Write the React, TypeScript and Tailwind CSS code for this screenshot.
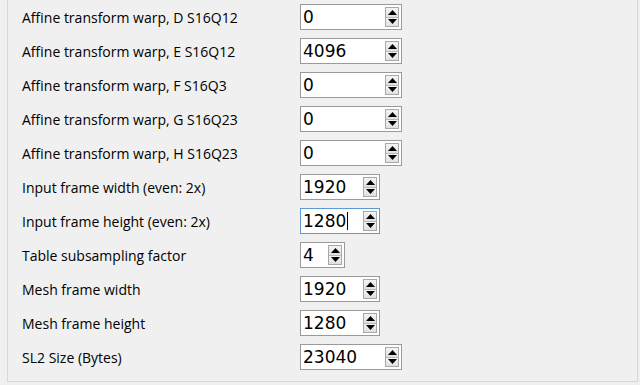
import React from 'react'

type Row = { label: string; value: string; width: string; focused?: boolean }

const rows: Row[] = [
  { label: 'Affine transform warp, D S16Q12', value: '0', width: 'w-[102px]' },
  { label: 'Affine transform warp, E S16Q12', value: '4096', width: 'w-[102px]' },
  { label: 'Affine transform warp, F S16Q3', value: '0', width: 'w-[102px]' },
  { label: 'Affine transform warp, G S16Q23', value: '0', width: 'w-[102px]' },
  { label: 'Affine transform warp, H S16Q23', value: '0', width: 'w-[102px]' },
  { label: 'Input frame width (even: 2x)', value: '1920', width: 'w-[80px]' },
  { label: 'Input frame height (even: 2x)', value: '1280', width: 'w-[80px]', focused: true },
  { label: 'Table subsampling factor', value: '4', width: 'w-[45px]' },
  { label: 'Mesh frame width', value: '1920', width: 'w-[80px]' },
  { label: 'Mesh frame height', value: '1280', width: 'w-[80px]' },
  { label: 'SL2 Size (Bytes)', value: '23040', width: 'w-[102px]' },
]

function SpinButtons() {
  return (
    <div className="flex flex-col h-full w-[14px] border border-[#a8a8a8] bg-[#e6e6e6]">
      <div className="flex-1 flex items-center justify-center border-b border-[#b8b8b8] bg-gradient-to-b from-[#f4f4f4] to-[#e0e0e0]">
        <svg width="9" height="5" viewBox="0 0 9 5">
          <path d="M0 5 L4.5 0 L9 5 Z" fill="#000" />
        </svg>
      </div>
      <div className="flex-1 flex items-center justify-center bg-gradient-to-b from-[#f4f4f4] to-[#e0e0e0]">
        <svg width="9" height="5" viewBox="0 0 9 5">
          <path d="M0 0 L4.5 5 L9 0 Z" fill="#000" />
        </svg>
      </div>
    </div>
  )
}

function SpinBox({ value, width, focused }: { value: string; width: string; focused?: boolean }) {
  return (
    <div
      className={`${width} h-[26px] flex items-stretch bg-white border ${
        focused ? 'border-[#5b9bd5]' : 'border-[#9a9a9a]'
      } py-[2px] pr-[2px]`}
    >
      <div className="flex-1 flex items-center pl-[2px] text-[17px] leading-none text-black font-['DejaVu_Sans',sans-serif]">
        {value}
        {focused && <span className="ml-[1px] w-[1px] h-[18px] bg-black" />}
      </div>
      <SpinButtons />
    </div>
  )
}

export default function App() {
  return (
    <div className="w-[640px] h-[385px] bg-[#f0f0f0] overflow-hidden">
      <div className="ml-[7px] mr-[2px] border-l border-r border-b border-[#d8d8d8] pb-[7px] pl-[14px]">
        {rows.map((r) => (
          <div key={r.label} className="h-[34px] flex items-center">
            <div className="w-[278px] text-[14px] text-black font-['Open_Sans',sans-serif]">{r.label}</div>
            <SpinBox value={r.value} width={r.width} focused={r.focused} />
          </div>
        ))}
      </div>
    </div>
  )
}
